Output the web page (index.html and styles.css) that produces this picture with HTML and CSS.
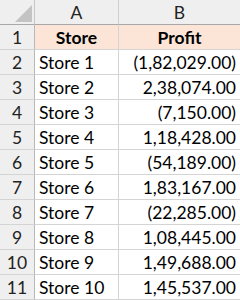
FILE: index.html
```html
<!DOCTYPE html>
<html>
<head>
<meta charset="utf-8">
<link rel="stylesheet" href="styles.css">
</head>
<body>
<div class="sheet">
  <div class="corner"><span class="tri"></span></div>
  <div class="colhead">A</div>
  <div class="colhead last">B</div>

  <div class="rowhead">1</div>
  <div class="cell hdr">Store</div>
  <div class="cell hdr last">Profit</div>

  <div class="rowhead">2</div><div class="cell">Store 1</div><div class="cell num last">(1,82,029.00)</div>
  <div class="rowhead">3</div><div class="cell">Store 2</div><div class="cell num last">2,38,074.00</div>
  <div class="rowhead">4</div><div class="cell">Store 3</div><div class="cell num last">(7,150.00)</div>
  <div class="rowhead">5</div><div class="cell">Store 4</div><div class="cell num last">1,18,428.00</div>
  <div class="rowhead">6</div><div class="cell">Store 5</div><div class="cell num last">(54,189.00)</div>
  <div class="rowhead">7</div><div class="cell">Store 6</div><div class="cell num last">1,83,167.00</div>
  <div class="rowhead">8</div><div class="cell">Store 7</div><div class="cell num last">(22,285.00)</div>
  <div class="rowhead">9</div><div class="cell">Store 8</div><div class="cell num last">1,08,445.00</div>
  <div class="rowhead">10</div><div class="cell">Store 9</div><div class="cell num last">1,49,688.00</div>
  <div class="rowhead">11</div><div class="cell">Store 10</div><div class="cell num last">1,45,537.00</div>
</div>
</body>
</html>
```
FILE: styles.css
```css
html, body {
  margin: 0;
  padding: 0;
  background: #ffffff;
}
.sheet {
  display: grid;
  grid-template-columns: 35px 84px 121px;
  grid-auto-rows: 25px;
  width: 240px;
  font-family: Lato, "Liberation Sans", sans-serif;
  font-size: 17.5px;
  color: #000;
}
.sheet > div {
  box-sizing: border-box;
  display: flex;
  align-items: center;
  white-space: nowrap;
  overflow: hidden;
}
.corner {
  background: #efefef;
  border-right: 1px solid #c6c6c6;
  border-bottom: 1px solid #a8a8a8;
  position: relative;
}
.tri {
  position: absolute;
  right: 2px;
  bottom: 2px;
  width: 0;
  height: 0;
  border-left: 17px solid transparent;
  border-bottom: 17px solid #c3c3c3;
}
.colhead {
  background: #efefef;
  justify-content: center;
  border-right: 1px solid #d0d0d0;
  border-bottom: 1px solid #a8a8a8;
  color: #222;
}
.rowhead {
  background: #efefef;
  justify-content: center;
  border-right: 1px solid #b8b8b8;
  border-bottom: 1px solid #d4d4d4;
  color: #222;
}
.cell {
  border-right: 1px solid #d4d4d4;
  border-bottom: 1px solid #d4d4d4;
  padding: 0 4px;
}
.last {
  border-right: none;
}
.hdr {
  background: #fce4d6;
  font-weight: bold;
  justify-content: center;
}
.num {
  justify-content: flex-end;
}
```
